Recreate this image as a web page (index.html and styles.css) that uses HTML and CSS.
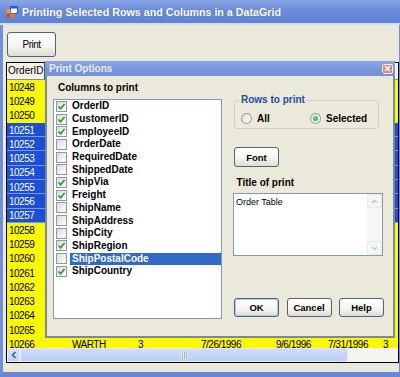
FILE: index.html
```html
<!DOCTYPE html>
<html>
<head>
<meta charset="utf-8">
<link rel="stylesheet" href="styles.css">
</head>
<body>
<div class="window">
  <div class="titlebar">
    <svg class="app-icon" width="12" height="12" viewBox="0 0 12 12">
      <rect x="4.5" y="0.5" width="7" height="7" fill="#ffffff" stroke="#2d5bb8"/>
      <rect x="4.5" y="0.5" width="7" height="2" fill="#2d5bb8"/>
      <rect x="0.5" y="3.5" width="4" height="4" fill="#f5a020"/>
      <rect x="0.5" y="7.5" width="4" height="4" fill="#e0402a"/>
      <rect x="4.5" y="7.5" width="4" height="4" fill="#f07a1c"/>
    </svg>
    <span class="title">Printing Selected Rows and Columns in a DataGrid</span>
  </div>
  <div class="frame">
    <div class="toolbar"><button class="btn btn-print">Print</button></div>
    <div class="grid">
      <div class="grid-head"><div class="hcell c1">OrderID</div><div class="hcell hrest"></div></div>
      <div class="grid-body">
        <div class="row"><span class="c1">10248</span></div>
        <div class="row"><span class="c1">10249</span></div>
        <div class="row"><span class="c1">10250</span></div>
        <div class="row sel"><span class="c1">10251</span></div>
        <div class="row sel"><span class="c1">10252</span></div>
        <div class="row sel"><span class="c1">10253</span></div>
        <div class="row sel"><span class="c1">10254</span></div>
        <div class="row sel"><span class="c1">10255</span></div>
        <div class="row sel"><span class="c1">10256</span></div>
        <div class="row sel"><span class="c1">10257</span></div>
        <div class="row"><span class="c1">10258</span></div>
        <div class="row"><span class="c1">10259</span></div>
        <div class="row"><span class="c1">10260</span></div>
        <div class="row"><span class="c1">10261</span></div>
        <div class="row"><span class="c1">10262</span></div>
        <div class="row"><span class="c1">10263</span></div>
        <div class="row"><span class="c1">10264</span></div>
        <div class="row"><span class="c1">10265</span></div>
        <div class="row"><span class="cw1">10266</span><span class="cw2">WARTH</span><span class="cw3">3</span><span class="cw4">7/26/1996</span><span class="cw5">9/6/1996</span><span class="cw6">7/31/1996</span><span class="cw7">3</span></div>
      </div>
      <div class="hscroll">
        <div class="sb-arrow">
          <svg width="6" height="8" viewBox="0 0 6 8"><path d="M4.5 1 L1.5 4 L4.5 7" fill="none" stroke="#4a5f8c" stroke-width="1.6"/></svg>
        </div>
        <div class="sb-thumb"><span class="grip"></span></div>
        <div class="sb-track"></div>
      </div>
    </div>
  </div>
</div>

<div class="dialog">
  <div class="dlg-title">
    <span class="dlg-caption">Print Options</span>
    <span class="dlg-close">
      <svg width="7" height="7" viewBox="0 0 7 7"><path d="M1 1 L6 6 M6 1 L1 6" stroke="#ffffff" stroke-width="1.6"/></svg>
    </span>
  </div>
  <div class="dlg-body">
    <div class="col-left">
      <div class="lbl lbl-cols">Columns to print</div>
      <div class="list">
        <div class="item"><span class="cb on"><svg width="9" height="9" viewBox="0 0 9 9"><path d="M1.5 4.5 L3.6 6.8 L7.6 2" fill="none" stroke="#2b9a2b" stroke-width="1.7"/></svg></span><span class="txt">OrderID</span></div>
        <div class="item"><span class="cb on"><svg width="9" height="9" viewBox="0 0 9 9"><path d="M1.5 4.5 L3.6 6.8 L7.6 2" fill="none" stroke="#2b9a2b" stroke-width="1.7"/></svg></span><span class="txt">CustomerID</span></div>
        <div class="item"><span class="cb on"><svg width="9" height="9" viewBox="0 0 9 9"><path d="M1.5 4.5 L3.6 6.8 L7.6 2" fill="none" stroke="#2b9a2b" stroke-width="1.7"/></svg></span><span class="txt">EmployeeID</span></div>
        <div class="item"><span class="cb"></span><span class="txt">OrderDate</span></div>
        <div class="item"><span class="cb"></span><span class="txt">RequiredDate</span></div>
        <div class="item"><span class="cb"></span><span class="txt">ShippedDate</span></div>
        <div class="item"><span class="cb on"><svg width="9" height="9" viewBox="0 0 9 9"><path d="M1.5 4.5 L3.6 6.8 L7.6 2" fill="none" stroke="#2b9a2b" stroke-width="1.7"/></svg></span><span class="txt">ShipVia</span></div>
        <div class="item"><span class="cb on"><svg width="9" height="9" viewBox="0 0 9 9"><path d="M1.5 4.5 L3.6 6.8 L7.6 2" fill="none" stroke="#2b9a2b" stroke-width="1.7"/></svg></span><span class="txt">Freight</span></div>
        <div class="item"><span class="cb"></span><span class="txt">ShipName</span></div>
        <div class="item"><span class="cb"></span><span class="txt">ShipAddress</span></div>
        <div class="item"><span class="cb"></span><span class="txt">ShipCity</span></div>
        <div class="item"><span class="cb on"><svg width="9" height="9" viewBox="0 0 9 9"><path d="M1.5 4.5 L3.6 6.8 L7.6 2" fill="none" stroke="#2b9a2b" stroke-width="1.7"/></svg></span><span class="txt">ShipRegion</span></div>
        <div class="item sel"><span class="cb"></span><span class="txt">ShipPostalCode</span></div>
        <div class="item"><span class="cb on"><svg width="9" height="9" viewBox="0 0 9 9"><path d="M1.5 4.5 L3.6 6.8 L7.6 2" fill="none" stroke="#2b9a2b" stroke-width="1.7"/></svg></span><span class="txt">ShipCountry</span></div>
      </div>
    </div>
    <div class="col-right">
      <fieldset class="group">
        <legend class="group-lbl">Rows to print</legend>
        <div class="radios">
          <span class="radio radio-all"><span class="rb"></span>All</span>
          <span class="radio"><span class="rb on"><span class="dot"></span></span>Selected</span>
        </div>
      </fieldset>
      <button class="btn btn-font">Font</button>
      <div class="lbl lbl-title">Title of print</div>
      <div class="textbox">
        <div class="tb-text">Order Table</div>
        <div class="vscroll">
          <span class="vs-btn"><svg width="7" height="5" viewBox="0 0 7 5"><path d="M1 4 L3.5 1.5 L6 4" fill="none" stroke="#c4c6c8" stroke-width="1.4"/></svg></span>
          <span class="vs-track"></span>
          <span class="vs-btn"><svg width="7" height="5" viewBox="0 0 7 5"><path d="M1 1 L3.5 3.5 L6 1" fill="none" stroke="#c4c6c8" stroke-width="1.4"/></svg></span>
        </div>
      </div>
      <div class="actions">
        <button class="btn btn-act btn-ok">OK</button>
        <button class="btn btn-act">Cancel</button>
        <button class="btn btn-act">Help</button>
      </div>
    </div>
  </div>
</div>
</body>
</html>
```

FILE: styles.css
```css
* { box-sizing: border-box; }
html, body { margin: 0; padding: 0; }
body {
  width: 400px;
  height: 377px;
  overflow: hidden;
  position: relative;
  background: #ebe9da;
  font-family: "Liberation Sans", Arial, sans-serif;
  color: #000;
}

.window {
  width: 400px;
  height: 377px;
  display: flex;
  flex-direction: column;
}

.titlebar {
  flex: none;
  height: 25px;
  display: flex;
  align-items: center;
  padding: 1px 0 0 6px;
  background: linear-gradient(#8aa6e6, #6b8cdb 45%, #5f82d6);
  border-bottom: 2px solid #d3dcf1;
}
.app-icon { flex: none; margin-right: 4px; }
.title {
  color: #fff;
  font-weight: bold;
  font-size: 10.7px;
  white-space: nowrap;
  text-shadow: 0 0 1px rgba(40, 60, 120, 0.4);
}

.frame {
  flex: 1;
  display: flex;
  flex-direction: column;
  border-left: 3px solid #6f8fd9;
  border-right: 1px solid #6f8fd9;
  border-bottom: 5px solid #6886d6;
}

.toolbar {
  flex: none;
  height: 37px;
  padding: 7px 0 5px 4px;
}

.btn {
  font-family: "Liberation Sans", Arial, sans-serif;
  color: #000;
  border: 1px solid #4f6281;
  border-radius: 3px;
  background: linear-gradient(#ffffff, #f4f3ee 60%, #dedcd2);
  padding: 0;
  margin: 0;
}
.btn-print {
  width: 49px;
  height: 25px;
  font-size: 10px;
  letter-spacing: -0.5px;
}

.grid {
  flex: none;
  height: 301px;
  margin-left: 3px;
  border: 1px solid #000;
  display: flex;
  flex-direction: column;
  background: #fbf800;
}
.grid-head {
  flex: none;
  height: 17px;
  display: flex;
  background: #f3f2ea;
  border-bottom: 1px solid #8a8a80;
  font-size: 10px;
}
.hcell { line-height: 16px; }
.grid-head .c1 {
  width: 38px;
  padding-left: 1px;
  border-right: 1px solid #555;
}
.hrest { flex: 1; }

.grid-body {
  flex: none;
  height: 268px;
  overflow: hidden;
  font-size: 10px;
  letter-spacing: -0.5px;
}
.row {
  height: 14.3px;
  display: flex;
  align-items: center;
  background: #fbf800;
  white-space: nowrap;
}
.row.sel {
  background: #1c4ed6;
  color: #fff;
  box-shadow: inset 0 -1px 0 #7898ea;
}
.row .c1 { width: 38px; padding-left: 2px; }
.cw1 { width: 63px; padding-left: 2px; }
.cw2 { width: 66px; padding-left: 2px; }
.cw3 { width: 63px; padding-left: 2px; }
.cw4 { width: 75px; padding-left: 2px; }
.cw5 { width: 52px; padding-left: 2px; }
.cw6 { width: 55px; padding-left: 2px; }
.cw7 { padding-left: 2px; }

.hscroll {
  flex: none;
  height: 14px;
  display: flex;
  background: #f6f5f0;
}
.sb-arrow {
  width: 13px;
  display: flex;
  align-items: center;
  justify-content: center;
  background: linear-gradient(#d6e3fd, #bccff8);
  border: 1px solid #eef3fe;
  border-radius: 2px;
}
.sb-thumb {
  width: 328px;
  display: flex;
  align-items: center;
  justify-content: center;
  background: linear-gradient(#cfdcfc, #bccff8);
  border: 1px solid #e4ebfd;
  border-radius: 2px;
}
.grip {
  width: 7px;
  height: 6px;
  background: repeating-linear-gradient(90deg, #eef3ff 0 1px, #98aee0 1px 2px);
}
.sb-track { flex: 1; }

/* dialog */
.dialog {
  position: absolute;
  left: 45px;
  top: 61px;
  width: 350px;
  height: 277px;
  display: flex;
  flex-direction: column;
}
.dlg-title {
  flex: none;
  height: 15px;
  display: flex;
  align-items: center;
  justify-content: space-between;
  padding: 0 2px 0 4px;
  background: linear-gradient(#8ea8e4, #7896dc 50%, #7391da);
}
.dlg-caption {
  color: #e9eefb;
  font-weight: bold;
  font-size: 10px;
}
.dlg-close {
  width: 11px;
  height: 10px;
  display: flex;
  align-items: center;
  justify-content: center;
  background: #d48a80;
  border: 1px solid #f3ece8;
  border-radius: 2px;
}
.dlg-body {
  flex: 1;
  display: flex;
  padding: 6px 0 0 6px;
  background: #ebe9da;
  border: 2px solid #7d879c;
  border-top: 0;
}

.lbl {
  font-weight: bold;
  font-size: 10px;
  line-height: 12px;
  height: 12px;
  white-space: nowrap;
}
.col-left {
  width: 169px;
  flex: none;
  display: flex;
  flex-direction: column;
}
.lbl-cols { padding-left: 5px; margin-bottom: 5px; }
.list {
  height: 220px;
  border: 1px solid #7f9db9;
  background: #fff;
}
.item {
  height: 12.7px;
  display: flex;
  align-items: center;
  padding-left: 2px;
  font-weight: bold;
  font-size: 10px;
  white-space: nowrap;
}
.cb {
  flex: none;
  width: 11px;
  height: 11px;
  margin-right: 3px;
  border: 1px solid #8a98ad;
  background: linear-gradient(135deg, #dcdcd3, #ffffff);
  display: flex;
  align-items: center;
  justify-content: center;
}
.txt {
  flex: 1;
  height: 12px;
  line-height: 12px;
  padding-left: 2px;
}
.item.sel .txt { background: #316ac5; color: #fff; }

.col-right {
  width: 151px;
  flex: none;
  margin-left: 11px;
  display: flex;
  flex-direction: column;
}
.group {
  margin: 12px 0 0 1px;
  width: 145px;
  min-width: 0;
  padding: 6px 0 4px 0;
  border: 1px solid #d0cfbf;
  border-radius: 3px;
}
.group-lbl {
  margin-left: 5px;
  padding: 0 1px;
  font-weight: bold;
  font-size: 10px;
  line-height: 12px;
  color: #1f4ea0;
}
.radios {
  display: flex;
  height: 12px;
  padding-left: 6px;
}
.radio {
  display: flex;
  align-items: center;
  font-weight: bold;
  font-size: 10px;
}
.radio-all { width: 69px; }
.rb {
  flex: none;
  width: 11px;
  height: 11px;
  margin-right: 5px;
  border-radius: 50%;
  border: 1px solid #8a98ad;
  background: linear-gradient(135deg, #dcdcd3, #ffffff);
  display: flex;
  align-items: center;
  justify-content: center;
}
.dot {
  width: 5px;
  height: 5px;
  border-radius: 50%;
  background: radial-gradient(circle at 35% 35%, #7edb7e, #21a121);
}

.btn-font {
  margin: 18px 0 0 1px;
  width: 45px;
  height: 20px;
  font-weight: bold;
  font-size: 9.5px;
}
.lbl-title { margin-top: 10px; padding-left: 3.5px; }
.textbox {
  margin-top: 4px;
  width: 150px;
  height: 63px;
  border: 1px solid #7f9db9;
  background: #fff;
  display: flex;
}
.tb-text {
  flex: 1;
  font-size: 9px;
  padding: 3px 0 0 2px;
}
.vscroll {
  width: 15px;
  display: flex;
  flex-direction: column;
  background: #f7f7f4;
}
.vs-btn {
  height: 14px;
  display: flex;
  align-items: center;
  justify-content: center;
  border: 1px solid #ecebe6;
  border-radius: 2px;
  background: #f6f6f3;
}
.vs-track { flex: 1; }

.actions {
  margin-top: 42px;
  padding-left: 1px;
  display: flex;
  justify-content: space-between;
}
.btn-act {
  width: 45px;
  height: 19px;
  font-weight: bold;
  font-size: 9.5px;
}
.btn-ok { box-shadow: inset 0 0 0 1px #b3c6ee; }
```
